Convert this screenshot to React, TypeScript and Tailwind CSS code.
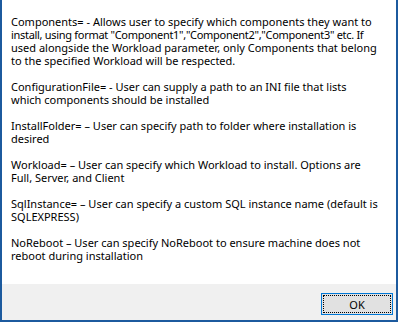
import React from 'react';

const paragraphs: string[][] = [
  [
    'Components= - Allows user to specify which components they want to',
    'install, using format "Component1","Component2","Component3" etc. If',
    'used alongside the Workload parameter, only Components that belong',
    'to the specified Workload will be respected.',
  ],
  [
    'ConfigurationFile= - User can supply a path to an INI file that lists',
    'which components should be installed',
  ],
  [
    'InstallFolder= \u2013 User can specify path to folder where installation is',
    'desired',
  ],
  [
    'Workload= \u2013 User can specify which Workload to install. Options are',
    'Full, Server, and Client',
  ],
  [
    'SqlInstance= \u2013 User can specify a custom SQL instance name (default is',
    'SQLEXPRESS)',
  ],
  [
    'NoReboot \u2013 User can specify NoReboot to ensure machine does not',
    'reboot during installation',
  ],
];

const App: React.FC = () => {
  return (
    <div className="w-[398px] h-[322px] flex flex-col bg-white border-x-2 border-b-2 border-[#1c5a9e] font-['Segoe_UI','Noto_Sans',sans-serif] text-[11px] text-black">
      {/* Message body */}
      <div className="flex-1 bg-white pl-[9px] pt-[15px] flex flex-col gap-[13px]">
        {paragraphs.map((lines, i) => (
          <div key={i}>
            {lines.map((line, j) => (
              <div
                key={j}
                className={i === 0 && j === 1 ? 'h-[13px] leading-[13px] whitespace-nowrap tracking-[-0.3px]' : 'h-[13px] leading-[13px] whitespace-nowrap'}
              >
                {line}
              </div>
            ))}
          </div>
        ))}
      </div>

      {/* Button bar */}
      <div className="h-[36px] bg-[#f0f0f0] flex items-start justify-end pt-[9px] pr-[3px]">
        <button className="w-[72px] h-[22px] bg-[#e1e1e1] border border-[#0078d7] p-[1px] flex">
          <span className="flex-1 flex items-center justify-center border border-dotted border-black leading-none text-[11px]">
            OK
          </span>
        </button>
      </div>
    </div>
  );
};

export default App;
